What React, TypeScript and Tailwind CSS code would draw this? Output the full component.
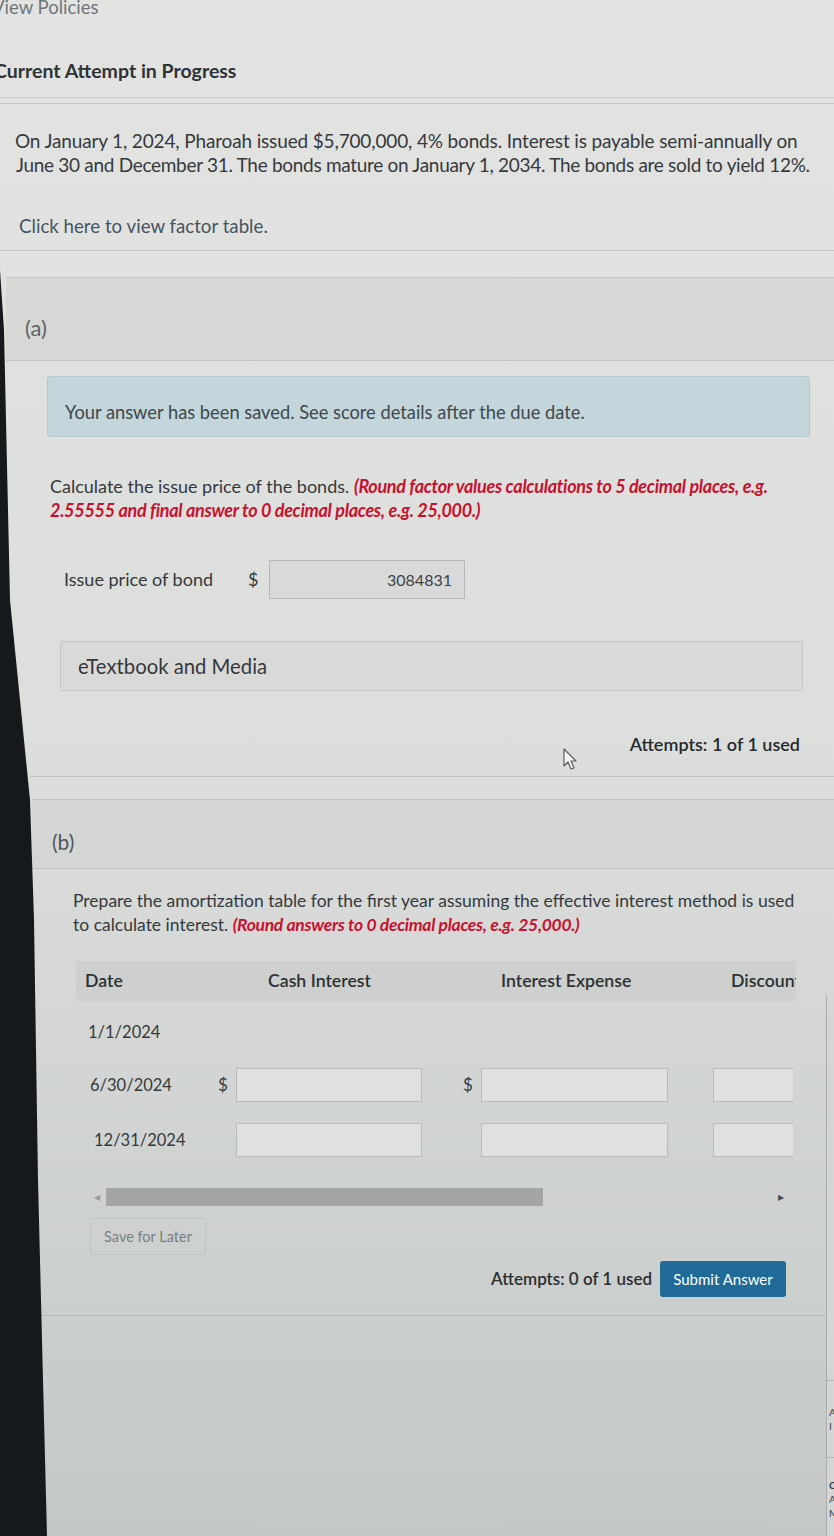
import React from 'react';

const dateRows = [
  { date: '1/1/2024', pad: 'pl-[12px]', inputs: false, dollar: false },
  { date: '6/30/2024', pad: 'pl-[14px]', inputs: true, dollar: true },
  { date: '12/31/2024', pad: 'pl-[18px]', inputs: true, dollar: false },
];

function Field({ width }: { width: string }) {
  return <div className={`h-[34px] shrink-0 border border-[#b9bcba] bg-[#dfe1df] ${width}`} />;
}

function Cursor() {
  return (
    <svg className="absolute left-[563px] top-[748px]" width="16" height="24" viewBox="0 0 16 24">
      <path d="M1 1 L1 18 L5 14 L8 21 L11 20 L8 13 L13 13 Z" fill="#f4f5f4" stroke="#5a5e60" strokeWidth="1.2" strokeLinejoin="round" />
    </svg>
  );
}

function Bezel() {
  return (
    <svg className="pointer-events-none absolute left-0 top-0" width="60" height="1536" viewBox="0 0 60 1536">
      <polygon points="0,270 4,330 10,600 22,720 30,800 34,920 38,1180 43,1380 47,1536 0,1536" fill="#16191c" />
    </svg>
  );
}

export default function App() {
  return (
    <div className="relative h-[1536px] w-[834px] overflow-hidden bg-linear-to-b from-[#e3e4e2] via-[#dcdedc] to-[#c3c8c6] font-['Lato','Open_Sans',sans-serif] text-[#35393c]">
      {/* top header */}
      <div className="-mt-[3px] -ml-[8px] text-[18.5px] leading-[20px] text-[#6d777d]">View Policies</div>
      <div className="mt-[42px] -ml-[6px] text-[19.5px] font-bold leading-[24px] text-[#2f3336]">Current Attempt in Progress</div>
      <div className="mt-[14px] h-px bg-[#ccceca]" />

      {/* question */}
      <div className="mt-[5px] border-t border-b border-[#c4c6c4] pb-[12px] pt-[25px]">
        <p className="pl-[15px] text-[19px] leading-[24px]">
          <span className="block whitespace-nowrap tracking-[-0.15px]">
            On January 1, 2024, Pharoah issued $5,700,000, 4% bonds. Interest is payable semi-annually on
          </span>
          <span className="block whitespace-nowrap pl-[1px] tracking-[-0.3px]">
            June 30 and December 31. The bonds mature on January 1, 2034. The bonds are sold to yield 12%.
          </span>
        </p>
        <p className="mt-[37px] pl-[19px] text-[18.7px] leading-[24px] text-[#465460]">Click here to view factor table.</p>
      </div>

      {/* part (a) */}
      <div className="mt-[26px] ml-[6px] h-[84px] border-t border-b border-[#c3c5c3] bg-[#d6d8d6] pl-[19px] pt-[36px]">
        <span className="text-[22px] leading-[28px] text-[#5b6368]">(a)</span>
      </div>

      <div className="mt-[15px] ml-[47px] h-[61px] w-[763px] rounded-[3px] border border-[#b4c8cd] bg-[#c2d6db] pl-[17px] pt-[23px] text-[18.3px] leading-[24px] text-[#41474b]">
        Your answer has been saved. See score details after the due date.
      </div>

      <p className="mt-[37px] ml-[50px] w-[745px] text-[18px] leading-[24px]">
        Calculate the issue price of the bonds.{' '}
        <span className="font-bold italic tracking-[-0.3px] text-[#c8112f]">
          (Round factor values calculations to 5 decimal places, e.g. 2.55555 and final answer to 0 decimal places, e.g. 25,000.)
        </span>
      </p>

      <div className="mt-[38px] ml-[64px] flex h-[39px] items-center text-[18px]">
        <span className="w-[184px]">Issue price of bond</span>
        <span className="w-[21px]">$</span>
        <div className="flex h-[39px] w-[196px] items-center justify-end border border-[#b6b9b7] bg-[#d8dad9] pr-[12px] text-[16px] text-[#3d4144]">
          3084831
        </div>
      </div>

      <div className="mt-[42px] ml-[60px] flex h-[50px] w-[743px] items-center rounded-[2px] border border-[#c3c5c3] bg-[#d9dad8] pl-[17px] text-[20.3px] text-[#34383b]">
        eTextbook and Media
      </div>

      <div className="mt-[41px] mr-[34px] text-right text-[18px] font-semibold leading-[24px] text-[#25292c]">Attempts: 1 of 1 used</div>
      <div className="mt-[20px] ml-[30px] h-px bg-[#bfc1bf]" />

      {/* part (b) */}
      <div className="mt-[22px] ml-[32px] h-[70px] border-t border-b border-[#c2c4c2] bg-[#d4d6d4] pl-[20px] pt-[29px]">
        <span className="text-[21px] leading-[26px] text-[#4f575c]">(b)</span>
      </div>

      <p className="mt-[20px] ml-[73px] w-[740px] text-[17.5px] leading-[24px]">
        Prepare the amortization table for the first year assuming the effective interest method is used to calculate interest.{' '}
        <span className="font-bold italic tracking-[-0.3px] text-[#c8112f]">(Round answers to 0 decimal places, e.g. 25,000.)</span>
      </p>

      <div className="mt-[24px] ml-[76px] flex h-[40px] w-[720px] items-center overflow-hidden whitespace-nowrap bg-[#cdd0ce] text-[17.7px] font-semibold text-[#2c3033]">
        <span className="w-[192px] shrink-0 pl-[9px]">Date</span>
        <span className="w-[233px] shrink-0">Cash Interest</span>
        <span className="w-[230px] shrink-0">Interest Expense</span>
        <span className="shrink-0">Discount Amortization</span>
      </div>

      <div className="ml-[76px] w-[717px] overflow-hidden">
        {dateRows.map((row, i) => (
          <div
            key={row.date}
            className={`flex h-[34px] items-center whitespace-nowrap text-[16.5px] ${i === 0 ? 'mt-[14px]' : i === 1 ? 'mt-[19px]' : 'mt-[21px]'}`}
          >
            <span className={`w-[142px] shrink-0 ${row.pad}`}>{row.date}</span>
            {row.inputs ? (
              <>
                <span className="w-[18px] shrink-0 text-[17px]">{row.dollar ? '$' : ''}</span>
                <Field width="w-[186px]" />
                <span className="w-[41px] shrink-0" />
                <span className="w-[18px] shrink-0 text-[17px]">{row.dollar ? '$' : ''}</span>
                <Field width="w-[187px]" />
                <span className="w-[45px] shrink-0" />
                <Field width="w-[100px]" />
              </>
            ) : null}
          </div>
        ))}
      </div>

      {/* horizontal scrollbar */}
      <div className="mt-[31px] ml-[88px] flex h-[18px] w-[702px] items-center bg-[#cfd2d0]">
        <span className="flex w-[18px] shrink-0 justify-center text-[8px] text-[#9a9d9c]">◀</span>
        <div className="h-[18px] w-[437px] bg-[#a3a6a5]" />
        <span className="ml-auto mr-[6px] text-[8px] text-[#4a4e50]">▶</span>
      </div>

      <button className="mt-[12px] ml-[90px] flex h-[37px] w-[116px] items-center justify-center rounded-[3px] border border-[#c2c4c2] text-[14.5px] text-[#7a7f82]">
        Save for Later
      </button>

      <div className="mt-[6px] mr-[48px] flex items-center justify-end gap-[8px]">
        <span className="text-[17px] font-semibold text-[#2a2e31]">Attempts: 0 of 1 used</span>
        <button className="flex h-[36px] w-[126px] items-center justify-center rounded-[3px] bg-[#206a97] text-[15px] text-white">
          Submit Answer
        </button>
      </div>

      <div className="mt-[18px] ml-[40px] mr-[9px] h-px bg-[#b8bcba]" />

      {/* right side panel edge */}
      <div className="absolute right-0 top-[995px] bottom-0 w-[8px] border-l border-[#a9adab] bg-[#d3d6d4] text-[10px] leading-[14px] text-[#3a3e41]">
        <div className="mt-[385px] border-t border-[#b6b9b7] pt-[24px] pl-[2px]">
          <div>A</div>
          <div>I</div>
        </div>
        <div className="mt-[24px] border-t border-[#b6b9b7] pt-[20px] pl-[2px]">
          <div className="font-bold">C</div>
          <div>A</div>
          <div>M</div>
        </div>
      </div>

      <Cursor />
      <Bezel />
    </div>
  );
}
